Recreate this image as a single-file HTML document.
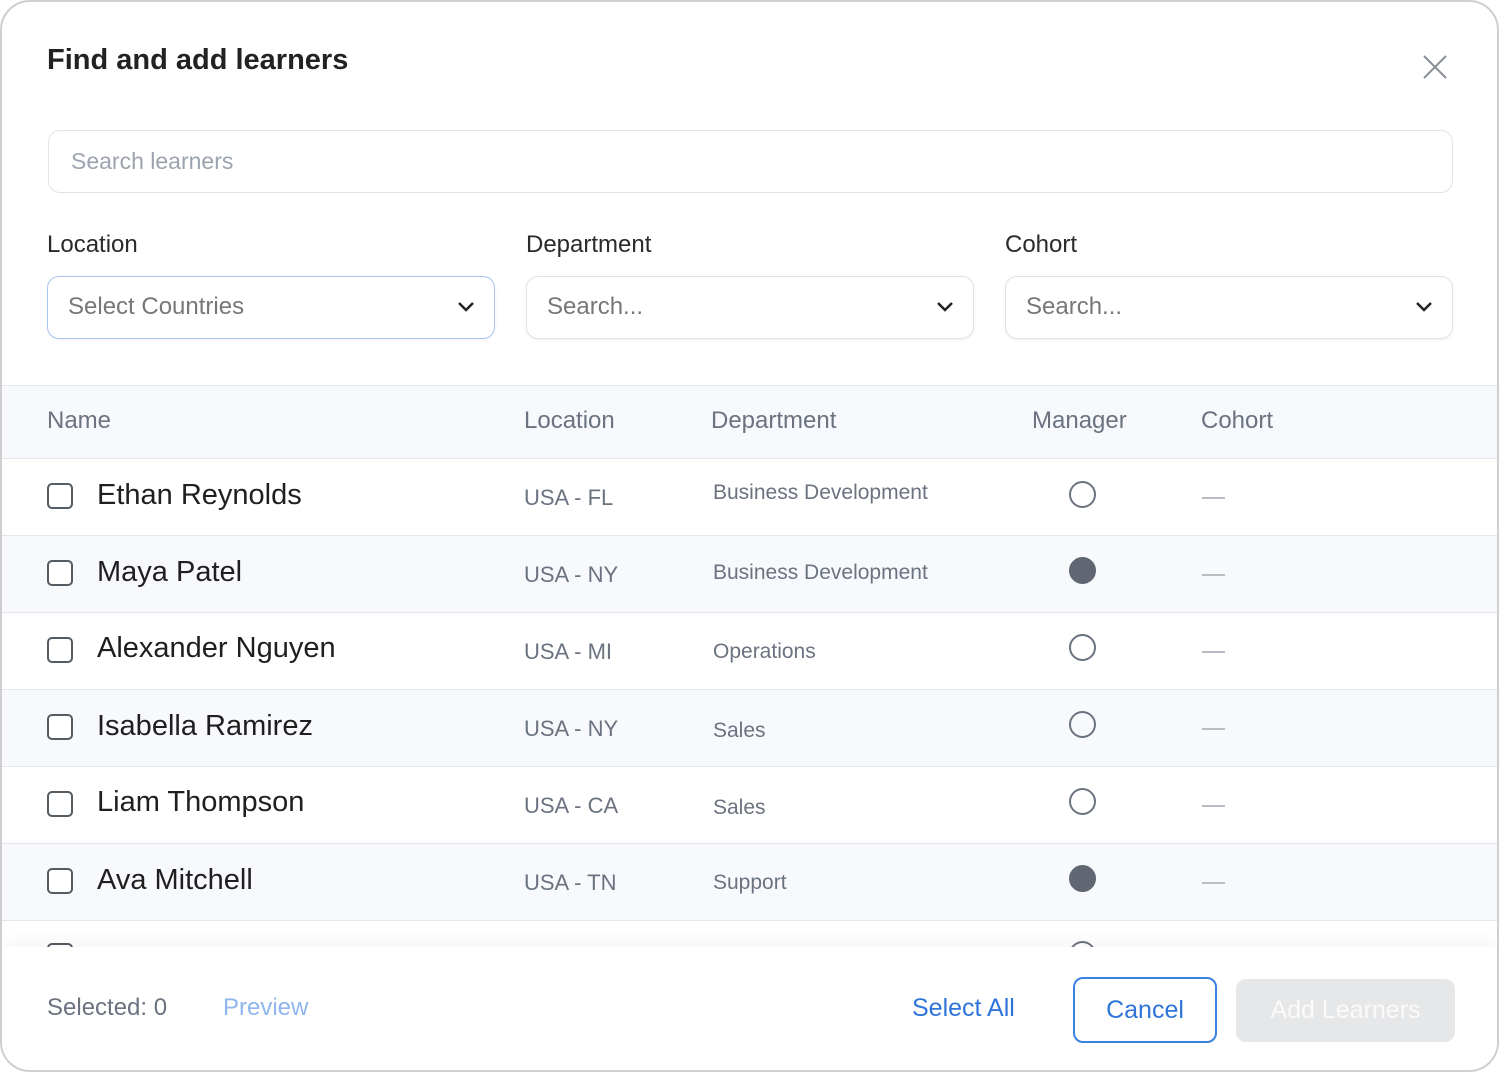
<!DOCTYPE html>
<html><head><style>
*{box-sizing:border-box;margin:0;padding:0}
body{width:1500px;height:1073px;background:#fff;font-family:"Liberation Sans",sans-serif;position:relative;overflow:hidden}
.modal{position:absolute;left:0;top:0;width:1499px;height:1072px;border:2px solid #cfcfcf;border-radius:30px;overflow:hidden;background:#fff}
.a{position:absolute;white-space:nowrap}
.title{left:45px;top:42px;font-size:29px;font-weight:bold;color:#222}
.search{left:46px;top:128px;width:1405px;height:63px;border:1.5px solid #dfe2e6;border-radius:12px;font-size:23px;color:#9ca3af;padding:17px 22px}
.lbl{top:229px;font-size:24px;color:#2a2a2a}
.sel{top:274px;width:448px;height:63px;border:1.5px solid #dfe2e6;border-radius:12px;font-size:24px;color:#777;padding:16px 20px;box-shadow:0 1px 3px rgba(0,0,0,.06)}
.sel svg{position:absolute;right:18px;top:24px}
.thead{left:0;top:383px;width:1497px;height:74px;background:#f7f9fc;border-top:1.5px solid #e3e6ea;border-bottom:1.5px solid #e3e6ea}
.th{top:405px;font-size:24px;color:#6b7280}
.row{left:0;width:1497px;height:77px;border-bottom:1.5px solid #e3e6ea}
.alt{background:#f7f9fc}
.cb{position:absolute;left:45px;width:26px;height:26px;border:2px solid #555b63;border-radius:5px;background:#fff}
.nm{position:absolute;left:95px;font-size:29px;color:#1f1f1f}
.loc{position:absolute;left:522px;font-size:22px;color:#6b7280}
.dep{position:absolute;left:711px;font-size:21px;color:#6b7280}
.rad{position:absolute;left:1067px;width:27px;height:27px;border-radius:50%;border:2px solid #6b7280}
.fill{background:#606772;border-color:#606772}
.dash{position:absolute;left:1200px;width:23px;height:2px;background:#b9bcc2}
.footer{left:0;top:945px;width:1497px;height:125px;background:#fff;box-shadow:0 -8px 14px rgba(0,0,0,.03)}
</style></head><body>
<div class="modal">
<div class="a title">Find and add learners</div>
<svg class="a" style="left:1420px;top:52px" width="26" height="26" viewBox="0 0 26 26"><path d="M2 2L24 24M24 2L2 24" stroke="#8a8f96" stroke-width="2" fill="none"/></svg>
<div class="a search">Search learners</div>
<div class="a lbl" style="left:45px">Location</div>
<div class="a lbl" style="left:524px">Department</div>
<div class="a lbl" style="left:1003px">Cohort</div>
<div class="a sel" style="left:45px;border-color:#a9c7ef">Select Countries<svg width="20" height="12" viewBox="0 0 20 12"><path d="M3 2l7 7 7-7" stroke="#222" stroke-width="2.5" fill="none"/></svg></div>
<div class="a sel" style="left:524px">Search...<svg width="20" height="12" viewBox="0 0 20 12"><path d="M3 2l7 7 7-7" stroke="#222" stroke-width="2.5" fill="none"/></svg></div>
<div class="a sel" style="left:1003px">Search...<svg width="20" height="12" viewBox="0 0 20 12"><path d="M3 2l7 7 7-7" stroke="#222" stroke-width="2.5" fill="none"/></svg></div>
<div class="a thead"></div>
<div class="a th" style="left:45px">Name</div>
<div class="a th" style="left:522px">Location</div>
<div class="a th" style="left:709px">Department</div>
<div class="a th" style="left:1030px">Manager</div>
<div class="a th" style="left:1199px">Cohort</div>

<div class="a row" style="top:457px"><div class="cb" style="top:24px"></div><div class="nm" style="top:20px">Ethan Reynolds</div><div class="loc" style="top:26px">USA - FL</div><div class="dep" style="top:22px">Business Development</div><div class="rad" style="top:22px"></div><div class="dash" style="top:38px"></div></div>
<div class="a row alt" style="top:534px"><div class="cb" style="top:24px"></div><div class="nm" style="top:20px">Maya Patel</div><div class="loc" style="top:26px">USA - NY</div><div class="dep" style="top:25px">Business Development</div><div class="rad fill" style="top:21px"></div><div class="dash" style="top:38px"></div></div>
<div class="a row" style="top:611px"><div class="cb" style="top:24px"></div><div class="nm" style="top:19px">Alexander Nguyen</div><div class="loc" style="top:26px">USA - MI</div><div class="dep" style="top:27px">Operations</div><div class="rad" style="top:21px"></div><div class="dash" style="top:38px"></div></div>
<div class="a row alt" style="top:688px"><div class="cb" style="top:24px"></div><div class="nm" style="top:20px">Isabella Ramirez</div><div class="loc" style="top:26px">USA - NY</div><div class="dep" style="top:29px">Sales</div><div class="rad" style="top:21px"></div><div class="dash" style="top:38px"></div></div>
<div class="a row" style="top:765px"><div class="cb" style="top:24px"></div><div class="nm" style="top:19px">Liam Thompson</div><div class="loc" style="top:26px">USA - CA</div><div class="dep" style="top:29px">Sales</div><div class="rad" style="top:21px"></div><div class="dash" style="top:38px"></div></div>
<div class="a row alt" style="top:842px"><div class="cb" style="top:24px"></div><div class="nm" style="top:20px">Ava Mitchell</div><div class="loc" style="top:26px">USA - TN</div><div class="dep" style="top:27px">Support</div><div class="rad fill" style="top:21px"></div><div class="dash" style="top:38px"></div></div>
<div class="a row" style="top:919px"><div class="cb" style="top:22px"></div><div class="rad" style="top:20px"></div></div>

<div class="a footer"></div>
<div class="a" style="left:45px;top:992px;font-size:24px;color:#6b7280">Selected: 0</div>
<div class="a" style="left:221px;top:992px;font-size:24px;color:#8fb6ee">Preview</div>
<div class="a" style="left:910px;top:992px;font-size:25px;color:#2f74d9">Select All</div>
<div class="a" style="left:1071px;top:975px;width:144px;height:66px;border:2px solid #3c82e0;border-radius:10px;font-size:25px;color:#2f74d9;text-align:center;line-height:62px">Cancel</div>
<div class="a" style="left:1234px;top:977px;width:219px;height:63px;background:#e6e7e9;border-radius:10px;font-size:25px;color:#fafafa;text-align:center;line-height:63px">Add Learners</div>
</div>
</body></html>
